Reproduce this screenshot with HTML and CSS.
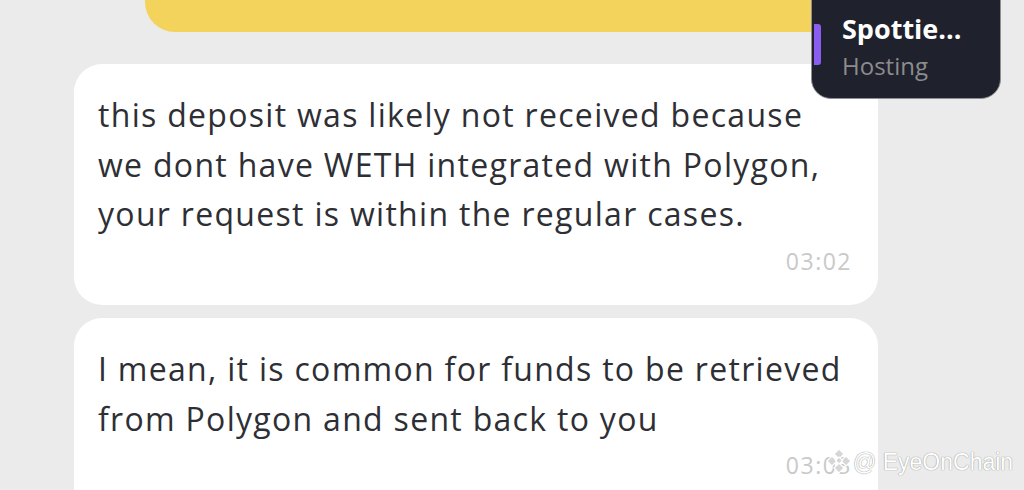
FILE: index.html
```html
<!DOCTYPE html>
<html>
<head>
<meta charset="utf-8">
<link rel="stylesheet" href="styles.css">
</head>
<body>
<div class="chat">
  <div class="sent"></div>
  <div class="bubble first">
    <p class="msg">this deposit was likely not received because<br>we dont have WETH integrated with Polygon,<br>your request is within the regular cases.</p>
    <div class="time">03:02</div>
  </div>
  <div class="bubble second">
    <p class="msg">I mean, it is common for funds to be retrieved<br>from Polygon and sent back to you</p>
    <div class="time">03:03</div>
  </div>
</div>
<div class="pip">
  <span class="pip-bar"></span>
  <div class="pip-name">Spottie...</div>
  <div class="pip-role">Hosting</div>
</div>
<div class="mark">
  <svg class="mark-logo" width="28" height="30" viewBox="0 0 28 30">
    <g fill="#d6d6d6" stroke="#fff" stroke-width="1.2">
      <path d="M14 2 L19 7 L14 12 L9 7 Z"/>
      <path d="M7 9 L12 14 L7 19 L2 14 Z"/>
      <path d="M21 9 L26 14 L21 19 L16 14 Z"/>
      <path d="M14 16 L19 21 L14 26 L9 21 Z"/>
      <path d="M14 10 L17.5 13.5 L14 17 L10.5 13.5 Z"/>
    </g>
  </svg>
  <span class="mark-text">@ EyeOnChain</span>
</div>
</body>
</html>
```
FILE: styles.css
```css
html, body {
  margin: 0;
  padding: 0;
  width: 1024px;
  height: 490px;
  overflow: hidden;
  background: #ebebeb;
  font-family: "Open Sans", "Liberation Sans", sans-serif;
  position: relative;
}
.chat {
  display: flex;
  flex-direction: column;
  gap: 13px;
}
.sent {
  margin-left: 145px;
  width: 700px;
  height: 32px;
  background: #f3d35c;
  border-radius: 0 0 0 30px;
  margin-bottom: 19px;
}
.bubble {
  margin-left: 74px;
  width: 804px;
  box-sizing: border-box;
  background: #fff;
  border-radius: 28px;
  padding: 26px 24px 0 24px;
}
.first {
  height: 241px;
}
.second {
  height: 172px;
  border-radius: 28px 28px 0 0;
}
.msg {
  margin: 0;
  font-size: 32px;
  line-height: 49.5px;
  letter-spacing: 1.3px;
  color: #2e2f35;
}
.time {
  text-align: right;
  font-size: 23px;
  letter-spacing: 1.5px;
  color: #c9c9c9;
  margin-top: 6px;
  padding-right: 2px;
}
.pip {
  position: absolute;
  left: 811px;
  top: -20px;
  width: 190px;
  height: 119px;
  box-sizing: border-box;
  background: #1f212c;
  border: 1px solid #8e8f95;
  border-radius: 20px;
  padding: 30px 0 0 30px;
}
.pip-bar {
  position: absolute;
  left: 2px;
  top: 43px;
  width: 7px;
  height: 41px;
  background: #8a5cf0;
  border-radius: 0 3px 3px 0;
}
.pip-name {
  color: #fff;
  font-weight: 700;
  font-size: 27px;
  line-height: 36px;
}
.pip-role {
  color: #8c8c8f;
  font-size: 24px;
  line-height: 38px;
}
.mark {
  position: absolute;
  left: 825px;
  top: 447px;
  display: flex;
  align-items: center;
}
.mark-logo {
  display: block;
}
.mark-text {
  color: #fff;
  font-family: "Liberation Sans", sans-serif;
  font-size: 23px;
  text-shadow: 0 0 1px #999, 0 0 1px #999;
}
```
